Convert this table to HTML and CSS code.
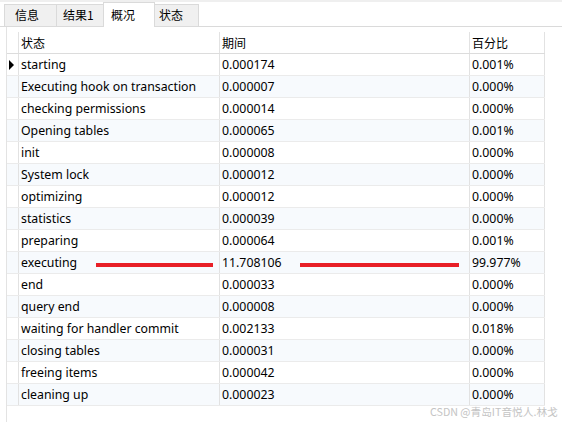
FILE: index.html
```html
<!DOCTYPE html>
<html>
<head>
<meta charset="utf-8">
<link rel="stylesheet" href="styles.css">
</head>
<body>
<div class="topstrip"></div>
<div class="tabbar">
  <div class="tab t1">信息</div>
  <div class="tab t2">结果1</div>
  <div class="tab t3 active">概况</div>
  <div class="tab t4">状态</div>
</div>
<div class="panel">
  <div class="grid">
    <div class="row head"><div class="ind"></div><div class="c1">状态</div><div class="c2">期间</div><div class="c3">百分比</div></div>
    <div class="row"><div class="ind"><svg width="6" height="10" viewBox="0 0 6 10"><path d="M0 0 L5 5 L0 10 Z" fill="#000"/></svg></div><div class="c1">starting</div><div class="c2">0.000174</div><div class="c3">0.001%</div></div>
    <div class="row alt"><div class="ind"></div><div class="c1">Executing hook on transaction</div><div class="c2">0.000007</div><div class="c3">0.000%</div></div>
    <div class="row"><div class="ind"></div><div class="c1">checking permissions</div><div class="c2">0.000014</div><div class="c3">0.000%</div></div>
    <div class="row alt"><div class="ind"></div><div class="c1">Opening tables</div><div class="c2">0.000065</div><div class="c3">0.001%</div></div>
    <div class="row"><div class="ind"></div><div class="c1">init</div><div class="c2">0.000008</div><div class="c3">0.000%</div></div>
    <div class="row alt"><div class="ind"></div><div class="c1">System lock</div><div class="c2">0.000012</div><div class="c3">0.000%</div></div>
    <div class="row"><div class="ind"></div><div class="c1">optimizing</div><div class="c2">0.000012</div><div class="c3">0.000%</div></div>
    <div class="row alt"><div class="ind"></div><div class="c1">statistics</div><div class="c2">0.000039</div><div class="c3">0.000%</div></div>
    <div class="row"><div class="ind"></div><div class="c1">preparing</div><div class="c2">0.000064</div><div class="c3">0.001%</div></div>
    <div class="row alt"><div class="ind"></div><div class="c1">executing</div><div class="c2">11.708106</div><div class="c3">99.977%</div></div>
    <div class="row"><div class="ind"></div><div class="c1">end</div><div class="c2">0.000033</div><div class="c3">0.000%</div></div>
    <div class="row alt"><div class="ind"></div><div class="c1">query end</div><div class="c2">0.000008</div><div class="c3">0.000%</div></div>
    <div class="row"><div class="ind"></div><div class="c1">waiting for handler commit</div><div class="c2">0.002133</div><div class="c3">0.018%</div></div>
    <div class="row alt"><div class="ind"></div><div class="c1">closing tables</div><div class="c2">0.000031</div><div class="c3">0.000%</div></div>
    <div class="row"><div class="ind"></div><div class="c1">freeing items</div><div class="c2">0.000042</div><div class="c3">0.000%</div></div>
    <div class="row alt"><div class="ind"></div><div class="c1">cleaning up</div><div class="c2">0.000023</div><div class="c3">0.000%</div></div>
  </div>
</div>
<div class="mark mark1"></div>
<div class="mark mark2"></div>
<div class="watermark">CSDN @青岛IT音悦人.林戈</div>
</body>
</html>
```
FILE: styles.css
```css
html, body {
  margin: 0;
  padding: 0;
}
body {
  width: 562px;
  height: 422px;
  overflow: hidden;
  position: relative;
  background: #fff;
  color: #000;
  font-family: "Noto Sans", "Noto Sans CJK SC", sans-serif;
  font-size: 12.3px;
}
.topstrip {
  height: 2px;
  background: #efefef;
}
.tabbar {
  display: flex;
  align-items: flex-end;
  height: 24px;
  padding-left: 4px;
  border-bottom: 1px solid #dadada;
}
.tab {
  box-sizing: border-box;
  height: 22px;
  line-height: 20px;
  border: 1px solid #dadada;
  border-bottom: 0;
  background: #f0f0f0;
  font-family: "Noto Sans CJK SC", sans-serif;
  font-size: 12px;
}
.tab + .tab { margin-left: -1px; }
.t1 { width: 53px; padding-left: 10px; }
.t2 { width: 48px; padding-left: 6px; }
.t3 { width: 52px; padding-left: 7px; }
.t4 { width: 45px; padding-left: 4px; }
.tab.active {
  height: 25px;
  margin-bottom: -1px;
  background: #fff;
  line-height: 24px;
  position: relative;
  z-index: 1;
}
.panel {
  margin-left: 6px;
  border-left: 1px solid #e3e3e3;
  height: 395px;
  padding-top: 5px;
  box-sizing: border-box;
}
.grid {
  display: flex;
  flex-direction: column;
  width: 538px;
}
.row {
  display: grid;
  grid-template-columns: 12px 201px 250px 75px;
  height: 22px;
  box-sizing: border-box;
  border-bottom: 1px solid #ebebeb;
}
.row.head {
  border-bottom-color: #dcdcdc;
}
.row.alt { background: #f7fafd; }
.row > div {
  box-sizing: border-box;
  border-right: 1px solid #e2e2e2;
  line-height: 21px;
  padding-left: 2px;
  white-space: nowrap;
  overflow: hidden;
}
.row > .ind {
  padding-left: 2px;
  display: flex;
  align-items: center;
}
.row.head > div {
  font-family: "Noto Sans CJK SC", sans-serif;
  font-size: 12px;
}
.mark {
  position: absolute;
  top: 263px;
  height: 4px;
  background: #e81f27;
}
.mark1 { left: 96px; width: 117px; }
.mark2 { left: 300px; width: 159px; }
.watermark {
  position: absolute;
  left: 430px;
  top: 404px;
  font-family: "Noto Sans CJK SC", sans-serif;
  font-size: 10.7px;
  color: #c4c4c4;
  white-space: nowrap;
}
```
